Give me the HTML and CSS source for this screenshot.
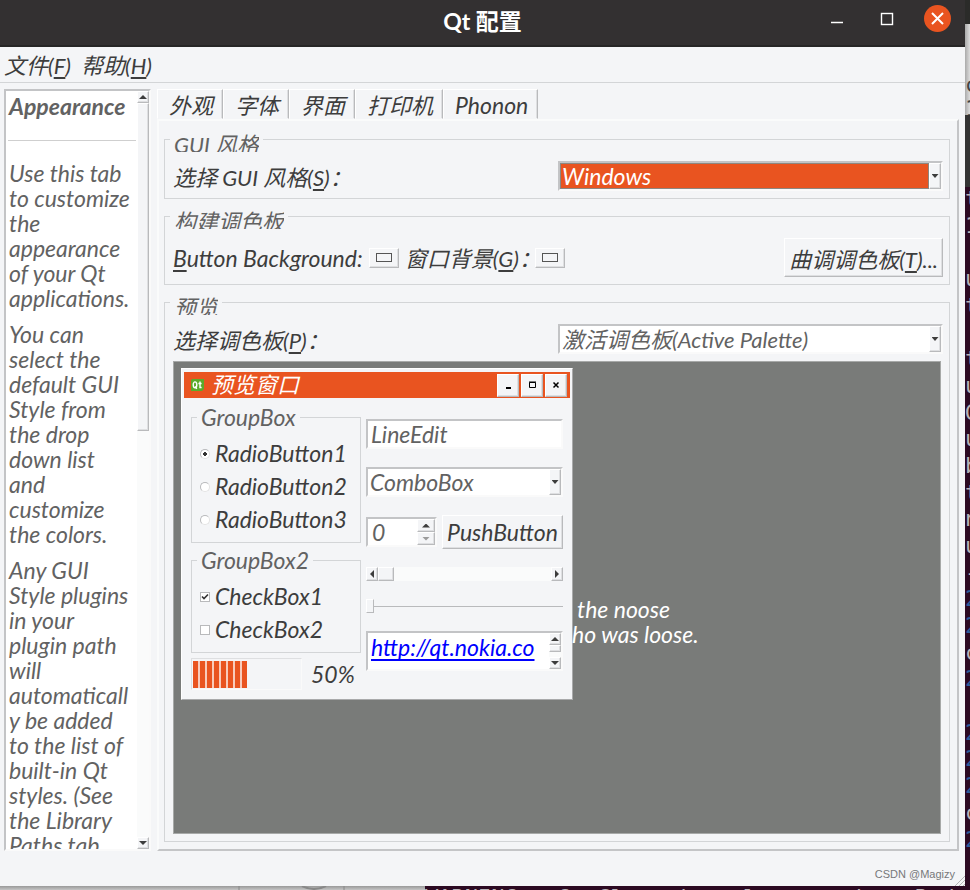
FILE: index.html
```html
<!DOCTYPE html>
<html lang="zh-CN">
<head>
<meta charset="utf-8">
<title>Qt 配置</title>
<link rel="stylesheet" href="styles.css">
</head>
<body>
<div class="desktop">
  <main class="window">
    <header class="titlebar">
      <h1>Qt 配置</h1>
      <div class="window-controls">
        <button type="button" aria-label="最小化"><svg width="14" height="28" viewBox="0 0 14 28"><path d="M1 17.5h12" stroke="#fff" stroke-width="1.5"/></svg></button>
        <button type="button" aria-label="最大化"><svg width="14" height="28" viewBox="0 0 14 28"><rect x="1.5" y="8.5" width="11" height="11" fill="none" stroke="#fff" stroke-width="1.4"/></svg></button>
        <button type="button" aria-label="关闭"><svg width="28" height="28" viewBox="0 0 28 28"><circle cx="13.5" cy="13.5" r="13.5" fill="#e95420"/><path d="M8 8l11 11m0-11l-11 11" stroke="#fff" stroke-width="2"/></svg></button>
      </div>
    </header>
    <nav class="menubar">
      <button type="button">文件(<u>F</u>)</button>
      <button type="button">帮助(<u>H</u>)</button>
    </nav>
    <div class="content">
      <aside class="help sunken latin">
        <div class="help-text">
          <h2>Appearance</h2>
          <hr>
          <p>Use this tab to customize the appearance of your Qt applications.</p>
          <p>You can select the default GUI Style from the drop down list and customize the colors.</p>
          <p>Any GUI Style plugins in your plugin path will automatically be added to the list of built-in Qt styles. (See the Library Paths tab</p>
        </div>
        <div class="scroll vertical">
          <button type="button" class="raised" aria-label="向上"><i class="up"></i></button>
          <span class="thumb raised"></span>
          <span class="track"></span>
          <button type="button" class="raised" aria-label="向下"><i class="down"></i></button>
        </div>
      </aside>
      <section class="tabs">
        <div class="tab-row">
          <button type="button">外观</button>
          <button type="button">字体</button>
          <button type="button">界面</button>
          <button type="button">打印机</button>
          <button type="button" class="latin">Phonon</button>
        </div>
        <div class="panel">
          <fieldset class="group">
            <legend><span>GUI 风格</span></legend>
            <div class="row">
              <label class="cjk" for="style">选择 GUI 风格(<u>S</u>)：</label>
              <div class="combo sunken wide focused latin">
                <select id="style"><option>Windows</option></select>
                <span class="drop raised"><i class="down"></i></span>
              </div>
            </div>
          </fieldset>
          <fieldset class="group">
            <legend><span>构建调色板</span></legend>
            <div class="row tools">
              <label class="latin" for="button-color"><u>B</u>utton Background:</label>
              <button type="button" id="button-color" class="swatch raised"><i></i></button>
              <label class="cjk" for="window-color">窗口背景(<u>G</u>)：</label>
              <button type="button" id="window-color" class="swatch raised"><i></i></button>
              <button type="button" class="push raised tune">曲调调色板(<u>T</u>)...</button>
            </div>
          </fieldset>
          <fieldset class="group preview">
            <legend><span>预览</span></legend>
            <div class="row">
              <label class="cjk" for="palette">选择调色板(<u>P</u>)：</label>
              <div class="combo sunken wide">
                <select id="palette"><option>激活调色板(Active Palette)</option></select>
                <span class="drop raised"><i class="down"></i></span>
              </div>
            </div>
            <div class="workspace">
              <section class="subwindow">
                <header class="subtitle">
                  <svg width="14" height="14" viewBox="0 0 14 14" aria-hidden="true"><path d="M2 1h12v10l-2 2H1V2z" fill="#5caa2b"/><ellipse cx="5" cy="6.8" rx="1.8" ry="2.9" fill="none" stroke="#fff" stroke-width="1.4"/><path d="M5.2 8.5l1.6 2.4M10 3.5v6h1.6M8.4 5.5h3.2" stroke="#fff" stroke-width="1.4" fill="none"/></svg>
                  <h3>预览窗口</h3>
                  <button type="button" class="raised" aria-label="最小化"><svg width="10" height="10" viewBox="0 0 10 10"><path d="M3 8h5" stroke="#000" stroke-width="2"/></svg></button>
                  <button type="button" class="raised" aria-label="最大化"><svg width="10" height="10" viewBox="0 0 10 10"><path d="M2.5 2.5h6v5h-6zM2 2h7" stroke="#000" fill="none"/></svg></button>
                  <button type="button" class="raised" aria-label="关闭"><svg width="10" height="10" viewBox="0 0 10 10"><path d="M2.5 2.5l5 5m0-5l-5 5" stroke="#000" stroke-width="1.5"/></svg></button>
                </header>
                <div class="sample latin">
                  <div class="sample-left">
                    <fieldset class="box">
                      <legend>GroupBox</legend>
                      <label><input type="radio" name="r" checked>RadioButton1</label>
                      <label><input type="radio" name="r">RadioButton2</label>
                      <label><input type="radio" name="r">RadioButton3</label>
                    </fieldset>
                    <fieldset class="box">
                      <legend>GroupBox2</legend>
                      <label><input type="checkbox" checked>CheckBox1</label>
                      <label><input type="checkbox">CheckBox2</label>
                    </fieldset>
                    <div class="progress-row">
                      <div class="progress" role="progressbar" aria-valuenow="50"><span></span></div>
                      <span>50%</span>
                    </div>
                  </div>
                  <div class="sample-right">
                    <input class="line sunken" type="text" value="LineEdit" aria-label="LineEdit">
                    <div class="combo sunken">
                      <select aria-label="ComboBox"><option>ComboBox</option></select>
                      <span class="drop raised"><i class="down"></i></span>
                    </div>
                    <div class="spin-row">
                      <div class="spin sunken">
                        <input type="text" value="0" aria-label="SpinBox">
                        <div class="steps">
                          <button type="button" class="raised" aria-label="增加"><i class="up"></i></button>
                          <button type="button" class="raised" aria-label="减少"><i class="down dim"></i></button>
                        </div>
                      </div>
                      <button type="button" class="push raised">PushButton</button>
                    </div>
                    <div class="scroll horizontal">
                      <button type="button" class="raised" aria-label="向左"><i class="left"></i></button>
                      <span class="thumb raised"></span>
                      <span class="track"></span>
                      <button type="button" class="raised" aria-label="向右"><i class="right"></i></button>
                    </div>
                    <input class="slider" type="range" value="0" aria-label="Slider">
                    <div class="browser sunken">
                      <div class="page"><a href="#">http://qt.nokia.com</a></div>
                      <div class="scroll vertical">
                        <button type="button" class="raised" aria-label="向上"><i class="up"></i></button>
                        <span class="thumb raised"></span>
                        <span class="track"></span>
                        <button type="button" class="raised" aria-label="向下"><i class="down"></i></button>
                      </div>
                    </div>
                  </div>
                </div>
              </section>
              <p class="rhyme latin"><span>the noose</span><span>ho was loose.</span></p>
            </div>
          </fieldset>
        </div>
      </section>
    </div>
    <footer class="statusbar">
      <span>CSDN @Magizy</span>
      <svg width="10" height="10" viewBox="0 0 10 10" aria-hidden="true"><path d="M0 10L10 0M4 10l6-6M8 10l2-2" stroke="#b4b5b7"/></svg>
    </footer>
  </main>
  <div class="behind-right">
    <div class="strip-light"><span>c</span><span>1</span></div>
    <div class="strip-dark"></div>
    <div class="strip-term">
      <span>t</span><span>1</span><span></span><span>u</span><span>t</span><span></span><span>t</span><span>u</span><span>G</span><span>u</span><span>b</span><span>t</span><span>n</span><span>u</span><span>-</span><b>2</b><b>2</b><span>c</span><b>2</b><span></span><b>2</b><b>2</b><b>2</b><span>c</span><b>2</b>
    </div>
  </div>
  <div class="behind-bottom">
    <div class="strip-panel"><svg width="110" height="4" viewBox="0 0 110 4" aria-hidden="true"><path d="M1 0v4M106 0v4" stroke="#888"/><path d="M64 0q12 6 24 0" stroke="#888" stroke-width="2" fill="none"/></svg></div>
    <div class="strip-log">WARNING : GovClass is only tested on Red</div>
  </div>
</div>
</body>
</html>
```
FILE: styles.css
```css
:root {
  --bg: #f4f5f7;
  --line: #d3d5d7;
  --edge: #b9babc;
  --text: #3d3d3d;
  --soft: #626262;
  --orange: #e95420;
  --ui: Lato, "Noto Sans CJK SC", sans-serif;
}

* { box-sizing: border-box; }

body {
  margin: 0;
  background: #2c0a22;
  color: var(--text);
  font: italic 22px/25px var(--ui);
}

button, input, select { font: inherit; color: inherit; border-radius: 0; }
button { padding: 0; border: 0; background: none; }
h1, h2, h3, p { margin: 0; font-size: inherit; }
u { text-decoration-thickness: 2px; text-underline-offset: 3px; text-decoration-skip-ink: none; }

/* Latin-only text is set a step larger than mixed Chinese text. */
button.latin, .latin { font-size: 23px; }

.desktop {
  display: grid;
  grid-template-columns: minmax(0, 1fr) 5px;
  grid-template-rows: minmax(0, 1fr) 4px;
  height: 100vh;
  min-height: 890px;
}

.window { display: flex; flex-direction: column; min-height: 0; background: var(--bg); }

.titlebar {
  display: grid;
  grid-template-columns: 1fr auto 1fr;
  height: 47px;
  padding: 5px 13px 0;
  background: #333031;
  border-bottom: 2px solid #272626;
  color: #fff;
}
.titlebar h1 { grid-column: 2; font-size: 23px; font-style: normal; font-weight: 700; line-height: 32px; }
.window-controls { display: flex; justify-content: flex-end; gap: 30px; height: 28px; }
.window-controls button { height: 28px; }
.window-controls svg { display: block; }
.window-controls button:first-child { margin-right: 6px; }

.menubar {
  display: flex;
  gap: 10px;
  height: 36px;
  padding: 2px 4px 0;
  border-bottom: 1px solid var(--line);
}

.content {
  display: grid;
  grid-template-columns: 147px minmax(0, 1fr);
  gap: 6px;
  flex: 1;
  min-height: 0;
  padding: 6px 6px 0 4px;
}

.sunken { border: 2px solid; border-color: #c3c4c6 #fafafa #fafafa #c3c4c6; background: #fff; }
.raised { border: 1px solid; border-color: #fff var(--edge) var(--edge) #fff; background: var(--bg); box-shadow: inset -1px -1px #dedfe1; }

.help { display: flex; min-height: 0; overflow: hidden; color: var(--soft); }
.help-text { flex: 1; min-width: 0; padding: 3px 4px 0 3px; overflow-wrap: anywhere; }
.help-text h2 { font-weight: 700; }
.help-text hr { height: 1px; margin: 21px -3px 20px -1px; border: 0; background: #cfcfcf; }
.help-text p + p { margin-top: 11px; }

.scroll { display: flex; background: #fafbfb; }
.scroll button { display: flex; align-items: center; justify-content: center; flex: none; width: 12px; height: 12px; }
.vertical { flex-direction: column; flex: none; width: 12px; }
.help .thumb { height: 328px; }
.scroll .track { flex: 1; }

i { display: block; }
.up, .down { width: 8px; height: 4px; background: var(--text); clip-path: polygon(0 0, 100% 0, 50% 100%); }
.up { clip-path: polygon(50% 0, 100% 100%, 0 100%); }
.dim { background: #9b9b9b; }
.left, .right { width: 4px; height: 8px; background: var(--text); clip-path: polygon(0 50%, 100% 0, 100% 100%); }
.right { clip-path: polygon(0 0, 100% 50%, 0 100%); }

.tabs { display: flex; flex-direction: column; min-width: 0; min-height: 0; }
.tab-row { display: flex; height: 30px; }
.tab-row button { padding: 3px 9px 0 11px; border: 1px solid; border-color: #fff var(--edge) transparent #fff; box-shadow: inset -1px 0 #dedfe1; }
.panel {
  display: flex;
  flex-direction: column;
  gap: 12px;
  flex: 1;
  min-height: 0;
  padding: 13px 7px 7px 5px;
  border: 2px solid;
  border-color: #fafbfb #c4c5c7 #c4c5c7 #fafbfb;
}

fieldset { min-width: 0; margin: 0; border: 1px solid var(--line); }
legend { color: var(--soft); padding: 0 4px; margin-left: -3px; }
.group { padding: 17px 8px 7px; }
.group > legend { height: 10px; }
.group > legend span { display: block; height: 18px; line-height: 22px; overflow: hidden; }
.row { display: flex; align-items: center; margin-right: -2px; }
.row label { white-space: nowrap; padding-top: 2px; }
/* The full-width colon carries blank space on its right side. */
.row .cjk { margin-right: -12px; }
.preview { display: flex; flex-direction: column; flex: 1; min-height: 0; }

.combo { display: flex; height: 30px; color: var(--soft); }
.combo select { flex: 1; min-width: 0; padding: 0 2px; border: 0; appearance: none; background: transparent; line-height: 25px; font-style: italic; }
.drop { display: flex; align-items: center; justify-content: center; width: 12px; }
.drop .down { width: 7px; height: 4px; }
.wide { width: 50%; margin-left: auto; }
.focused select { background: var(--orange); color: #fff; outline: 1px solid #8d8780; outline-offset: -1px; }

.swatch { display: flex; align-items: center; justify-content: center; width: 30px; height: 20px; margin: 0 6px; }
.swatch i { width: 16px; height: 9px; border: 1px solid #555; }
.push { white-space: nowrap; padding: 0 4px; }
.tune { height: 39px; margin-left: auto; padding-top: 3px; }

.workspace {
  display: flex;
  align-items: flex-start;
  flex: 1;
  min-height: 0;
  margin-top: 7px;
  padding: 6px 0 0 7px;
  background: #797b79;
  border: 1px solid #a7a9a8;
  overflow: hidden;
}
.subwindow { flex: none; width: 392px; height: 332px; padding: 3px 2px; background: var(--bg); border: 1px solid; border-color: #fff #a9aaab #a9aaab #fff; }
.subtitle { display: flex; align-items: center; gap: 2px; height: 26px; padding: 0 3px 0 6px; background: var(--orange); color: #fff; }
.subtitle h3 { flex: 1; padding-left: 5px; font-weight: 400; line-height: 26px; }
.subtitle button { display: flex; align-items: center; justify-content: center; width: 22px; height: 23px; }

.sample { display: grid; grid-template-columns: 170px 197px; gap: 5px; padding: 7px 7px; }
.sample-left { display: flex; flex-direction: column; gap: 5px; }
.box { padding: 8px 8px 6px; }
.box legend { line-height: 24px; }
.box label { display: flex; align-items: center; gap: 5px; height: 33px; white-space: nowrap; }
.box input { appearance: none; flex: none; width: 10px; height: 10px; margin: 0; border: 1px solid var(--edge); background: #fff; }
.box input[type="radio"] { border-radius: 50%; border-color: var(--edge) #e3e3e3 #e3e3e3 var(--edge); }
.box input[type="radio"]:checked { background: radial-gradient(circle, #333 0 2px, #fff 2px); }
.box input[type="checkbox"]:checked { background: #fff url("data:image/svg+xml,%3Csvg xmlns='http://www.w3.org/2000/svg' viewBox='0 0 8 8'%3E%3Cpath d='M1 3.5l2 2 4-4' fill='none' stroke='%23333' stroke-width='1.6'/%3E%3C/svg%3E"); }
.progress-row { display: flex; align-items: center; gap: 9px; height: 32px; }
.progress { width: 111px; height: 32px; padding: 2px 1px; border: 1px solid; border-color: #dedfe1 #fafafa #fafafa #dedfe1; }
.progress span { display: block; width: 50%; height: 27px; background: repeating-linear-gradient(90deg, var(--orange) 0 5px, #f8cbbb 5px 7px); }

.sample-right { display: flex; flex-direction: column; gap: 18px; padding-top: 14px; }
.line { width: 100%; height: 30px; padding: 0 3px; color: var(--soft); }
.spin-row { display: flex; gap: 5px; align-items: center; height: 34px; }
.spin { display: flex; width: 71px; height: 30px; color: var(--soft); }
.spin input { flex: 1; min-width: 0; padding: 0 4px; border: 0; background: transparent; }
.steps { display: flex; flex-direction: column; width: 18px; }
.steps button { display: flex; align-items: center; justify-content: center; flex: 1; }
.spin-row .push { flex: 1; height: 34px; }
.horizontal { height: 14px; }
.horizontal button { height: 14px; }
.horizontal .thumb { width: 16px; }
.slider { appearance: none; width: 100%; height: 14px; margin: 0; background: linear-gradient(var(--edge), var(--edge)) center / 100% 1px no-repeat; }
.slider::-webkit-slider-thumb { appearance: none; width: 8px; height: 14px; background: var(--bg); border: 1px solid; border-color: #fff var(--edge) var(--edge) #fff; }
.browser { display: flex; height: 40px; overflow: hidden; }
.page { flex: 1; min-width: 0; padding: 2px 4px 0 3px; overflow-wrap: anywhere; }
.page a { color: #00f; text-decoration-thickness: 2px; text-underline-offset: 3px; text-decoration-skip-ink: none; }
.browser .thumb { height: 7px; }

.rhyme { display: flex; flex-direction: column; margin: 229px 0 0 -1px; color: #fff; }
.rhyme span:first-child { padding-left: 5px; }

.statusbar { display: flex; align-items: flex-end; justify-content: flex-end; height: 35px; font: 11px/24px "Liberation Sans", sans-serif; color: #77787a; }

.behind-right { grid-row: 1 / 3; grid-column: 2; display: flex; flex-direction: column; overflow: hidden; background: #2c0a22; color: #b9b3b8; font: 22px/24px "DejaVu Sans Mono", monospace; border-top: 24px solid #2b2b29; }
.strip-light { height: 91px; padding-top: 49px; background: linear-gradient(90deg, #aaa, #ddd); color: #444; overflow: hidden; }
.strip-light span { display: block; }
.strip-dark { height: 72px; background: #333; }
.strip-term { display: flex; flex-direction: column; height: 667px; }
.strip-term > * { flex: 1; font-weight: 400; }
.strip-term b { color: #2e5c9c; }
.behind-bottom { grid-row: 2; display: flex; overflow: hidden; }
.strip-panel { flex: none; width: 425px; padding-left: 238px; background: linear-gradient(#999, #c4c4c4); }
.strip-panel svg { display: block; }
.strip-log { flex: 1; white-space: nowrap; overflow: hidden; color: #b9b3b8; font: 22px/24px "DejaVu Sans Mono", monospace; }
```
